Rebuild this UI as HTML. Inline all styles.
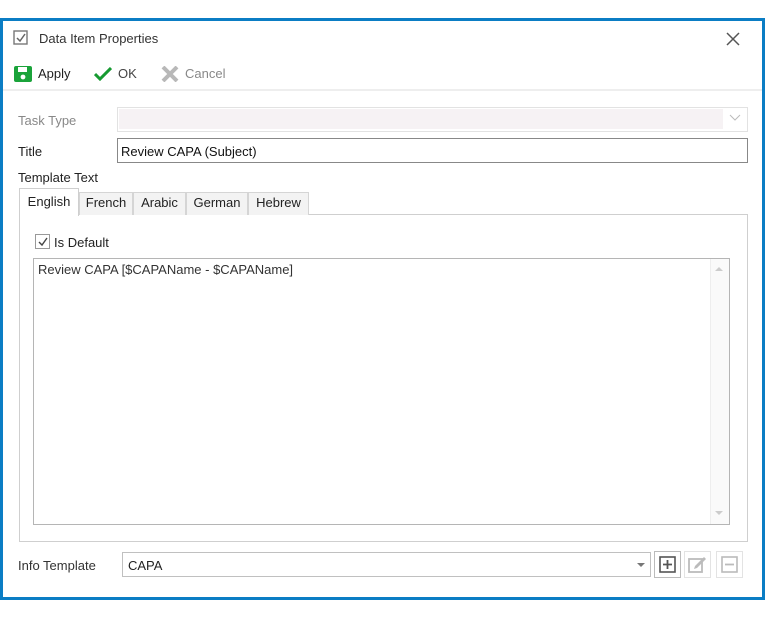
<html><head><style>
body{margin:0;width:765px;height:617px;background:#fff;font-family:"Liberation Sans",sans-serif;font-size:13px;color:#222;position:relative;overflow:hidden}
div,span{position:absolute;box-sizing:border-box}
.frame{left:0;top:18px;width:765px;height:582px;border:3px solid #0b7dc4;}
.lbl{white-space:nowrap}
.box{border:1px solid #adadad;background:#fff}
.tab{top:192px;height:23px;border:1px solid #d5d5d5;border-bottom:none;background:#f3f3f3;text-align:center;line-height:20px}
.btn{top:551px;width:27px;height:27px;border:1px solid #e3e3e3;background:#fff}
</style></head><body>
<div class="frame"></div>
<svg style="position:absolute;left:13px;top:30px" width="16" height="16"><rect x="1" y="1" width="13" height="13" fill="none" stroke="#777" stroke-width="1.4"/><path d="M4 8 L7 11 L12 4" fill="none" stroke="#666" stroke-width="1.5"/></svg>
<div class="lbl" style="left:39px;top:31px;color:#333">Data Item Properties</div>
<svg style="position:absolute;left:726px;top:32px" width="14" height="14"><path d="M1 1L13 13M13 1L1 13" stroke="#555" stroke-width="1.5"/></svg>
<svg style="position:absolute;left:14px;top:66px" width="18" height="16"><rect x="0" y="0" width="18" height="16" rx="2" fill="#1aa33a"/><rect x="4" y="1" width="9" height="5" fill="#fff"/><circle cx="9" cy="11" r="2.4" fill="#fff"/></svg>
<div class="lbl" style="left:38px;top:66px">Apply</div>
<svg style="position:absolute;left:94px;top:67px" width="18" height="14"><path d="M1 7 L6 12 L17 1" fill="none" stroke="#169a31" stroke-width="3"/></svg>
<div class="lbl" style="left:118px;top:66px;color:#444">OK</div>
<svg style="position:absolute;left:161px;top:66px" width="18" height="16"><path d="M2 1L16 15M16 1L2 15" stroke="#b8b8b8" stroke-width="4"/></svg>
<div class="lbl" style="left:185px;top:66px;color:#888">Cancel</div>
<div style="left:3px;top:89px;width:759px;height:2px;background:#eee"></div>
<div class="lbl" style="left:18px;top:113px;color:#888">Task Type</div>
<div style="left:117px;top:107px;width:631px;height:25px;border:1px solid #e2e2e2;background:#fff"></div>
<div style="left:119px;top:109px;width:604px;height:20px;background:#f6f2f4"></div>
<svg style="position:absolute;left:729px;top:114px" width="12" height="8"><path d="M1 1L6 6L11 1" fill="none" stroke="#bbb"/></svg>
<div class="lbl" style="left:18px;top:144px">Title</div>
<div class="box" style="left:117px;top:138px;width:631px;height:25px;border-color:#888"></div>
<div class="lbl" style="left:121px;top:144px;color:#111">Review CAPA (Subject)</div>
<div class="lbl" style="left:18px;top:170px">Template Text</div>
<div style="left:19px;top:214px;width:729px;height:328px;border:1px solid #cfcfcf"></div>
<div class="tab" style="left:79px;width:54px">French</div>
<div class="tab" style="left:133px;width:53px">Arabic</div>
<div class="tab" style="left:186px;width:62px">German</div>
<div class="tab" style="left:248px;width:61px">Hebrew</div>
<div class="tab" style="left:19px;top:188px;width:60px;height:28px;background:#fff;border-color:#cfcfcf;line-height:26px">English</div>
<div style="left:35px;top:234px;width:15px;height:15px;border:1px solid #999;background:#fff"></div>
<svg style="position:absolute;left:37px;top:236px" width="12" height="12"><path d="M2 6L5 9L10 2" fill="none" stroke="#444" stroke-width="1.4"/></svg>
<div class="lbl" style="left:54px;top:235px">Is Default</div>
<div class="box" style="left:33px;top:258px;width:697px;height:267px;border-color:#b5b5b5"></div>
<div class="lbl" style="left:38px;top:262px;color:#333">Review CAPA [$CAPAName - $CAPAName]</div>
<div style="left:710px;top:259px;width:19px;height:265px;background:#fafafa;border-left:1px solid #eee"></div>
<svg style="position:absolute;left:714px;top:266px" width="10" height="6"><path d="M1 5L5 1L9 5Z" fill="#ccc"/></svg>
<svg style="position:absolute;left:714px;top:510px" width="10" height="6"><path d="M1 1L5 5L9 1Z" fill="#ccc"/></svg>
<div class="lbl" style="left:18px;top:558px;color:#333">Info Template</div>
<div class="box" style="left:122px;top:552px;width:529px;height:25px;border-color:#c0c0c0"></div>
<div class="lbl" style="left:128px;top:558px">CAPA</div>
<svg style="position:absolute;left:637px;top:563px" width="8" height="5"><path d="M0 0L4 4L8 0Z" fill="#777"/></svg>
<div class="btn" style="left:654px;border-color:#bbb"></div>
<svg style="position:absolute;left:659px;top:556px" width="17" height="17"><rect x="1" y="1" width="15" height="15" fill="none" stroke="#555" stroke-width="1.6"/><path d="M8.5 4V13M4 8.5H13" stroke="#555" stroke-width="1.8"/></svg>
<div class="btn" style="left:684px"></div>
<svg style="position:absolute;left:688px;top:554px" width="20" height="20"><rect x="1" y="5" width="13" height="13" fill="none" stroke="#bbb" stroke-width="1.8"/><path d="M7 12L16 3L18 5L9 14L6 15Z" fill="#bbb"/></svg>
<div class="btn" style="left:716px"></div>
<svg style="position:absolute;left:721px;top:556px" width="17" height="17"><rect x="1" y="1" width="15" height="15" fill="none" stroke="#bbb" stroke-width="1.6"/><path d="M4 8.5H13" stroke="#bbb" stroke-width="1.8"/></svg>
</body></html>
